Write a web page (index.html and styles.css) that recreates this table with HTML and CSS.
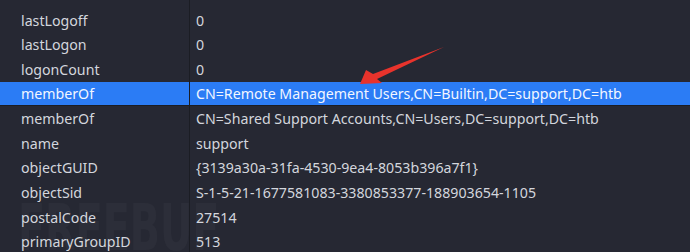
FILE: index.html
```html
<!DOCTYPE html>
<html>
<head>
<meta charset="utf-8">
<link rel="stylesheet" href="styles.css">
</head>
<body>
<div class="view">
  <div class="table">
    <div class="row top"><div class="key"></div><div class="val"></div></div>
    <div class="row"><div class="key">lastLogoff</div><div class="val">0</div></div>
    <div class="row"><div class="key">lastLogon</div><div class="val">0</div></div>
    <div class="row"><div class="key">logonCount</div><div class="val">0</div></div>
    <div class="row sel"><div class="key">memberOf</div><div class="val">CN=Remote Management Users,CN=Builtin,DC=support,DC=htb</div></div>
    <div class="row"><div class="key">memberOf</div><div class="val">CN=Shared Support Accounts,CN=Users,DC=support,DC=htb</div></div>
    <div class="row"><div class="key">name</div><div class="val">support</div></div>
    <div class="row"><div class="key">objectGUID</div><div class="val">{3139a30a-31fa-4530-9ea4-8053b396a7f1}</div></div>
    <div class="row"><div class="key">objectSid</div><div class="val">S-1-5-21-1677581083-3380853377-188903654-1105</div></div>
    <div class="row"><div class="key">postalCode</div><div class="val">27514</div></div>
    <div class="row"><div class="key">primaryGroupID</div><div class="val">513</div></div>
  </div>
  <div class="watermark">FREEBUF</div>
  <svg class="arrow" width="690" height="252" viewBox="0 0 690 252">
    <polygon points="360,84 366,70 373,74 444,47 377,79 382,83" fill="#e8332c"/>
  </svg>
</div>
</body>
</html>
```
FILE: styles.css
```css
html, body {
  margin: 0;
  padding: 0;
  background: #262833;
}
.view {
  position: relative;
  width: 690px;
  height: 252px;
  overflow: hidden;
  font-family: "Noto Sans", "Open Sans", sans-serif;
  font-size: 14.2px;
  color: #d3d6dd;
}
.table {
  display: flex;
  flex-direction: column;
  margin-top: -16.6px;
}
.row {
  display: grid;
  grid-template-columns: 189px 1px 1fr;
  height: 24.6px;
  align-items: center;
  box-sizing: border-box;
}
.row::before {
  content: "";
  grid-column: 2;
  grid-row: 1;
  align-self: stretch;
  background: #1b1d24;
}
.key {
  grid-column: 1;
  grid-row: 1;
  padding-left: 21px;
}
.val {
  grid-column: 3;
  grid-row: 1;
  padding-left: 6px;
  white-space: nowrap;
}
.row.sel {
  background: #2b7cf5;
  color: #f2f6ff;
  border-bottom: 1px solid #1b1d24;
}
.watermark {
  position: absolute;
  left: 18px;
  top: 196px;
  font-family: "DejaVu Sans", sans-serif;
  font-weight: bold;
  font-size: 64px;
  color: rgba(255, 255, 255, 0.03);
  line-height: 1;
  transform: scaleX(0.62);
  transform-origin: left top;
}
.arrow {
  position: absolute;
  left: 0;
  top: 0;
}
```
